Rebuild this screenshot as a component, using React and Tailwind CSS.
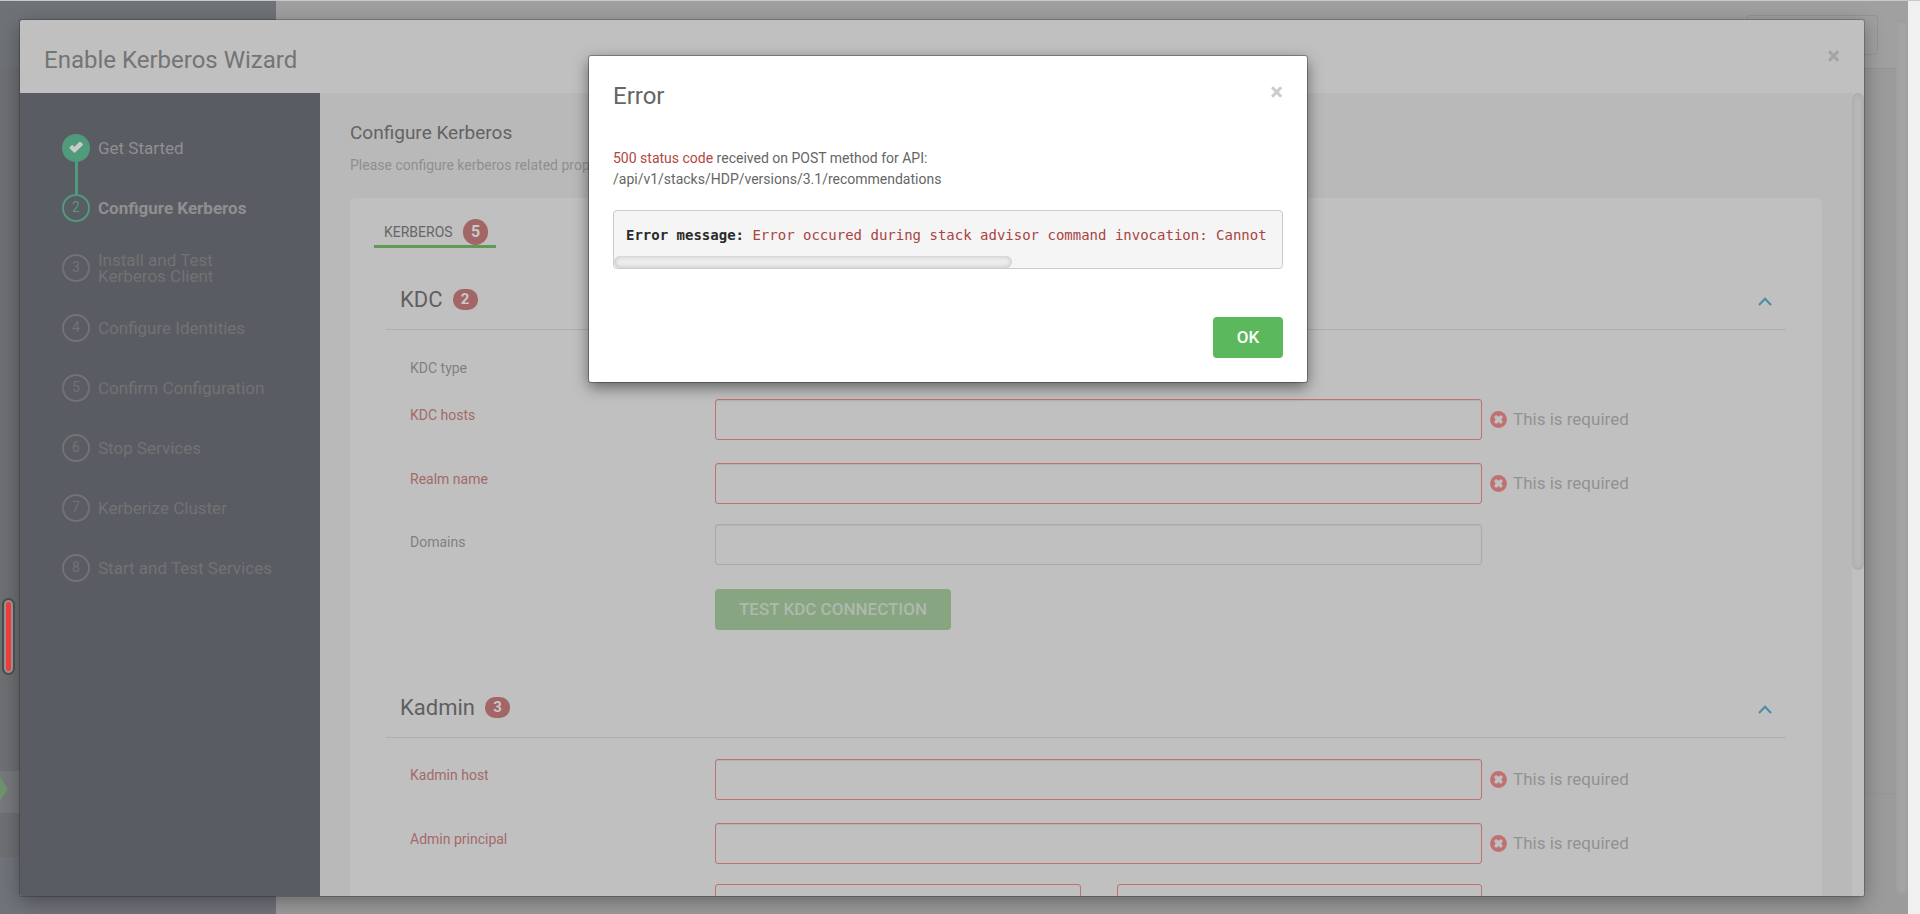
const steps = [
  { id: 1, label: 'Get Started', state: 'done' },
  { id: 2, label: 'Configure Kerberos', state: 'current' },
  { id: 3, label: 'Install and Test Kerberos Client' },
  { id: 4, label: 'Configure Identities' },
  { id: 5, label: 'Confirm Configuration' },
  { id: 6, label: 'Stop Services' },
  { id: 7, label: 'Kerberize Cluster' },
  { id: 8, label: 'Start and Test Services' },
]

function Check() {
  return (
    <svg viewBox="0 0 16 16" className="h-4 w-4" aria-hidden="true">
      <path
        d="M2.4 8.8 4.2 7 6.4 9.2 12 3.6 14 5.5 6.5 12.8Z"
        fill="#c8cbc9"
        stroke="#c8cbc9"
        strokeWidth="1.8"
        strokeLinejoin="round"
      />
    </svg>
  )
}

function ErrorIcon() {
  return (
    <svg viewBox="0 0 17 17" className="h-[17px] w-[17px] shrink-0" aria-hidden="true">
      <circle cx="8.5" cy="8.5" r="8.4" fill="#c07070" />
      <path
        d="M6.1 4.1 8.5 5.7 10.9 4.1 12.9 6.1 11.3 8.5 12.9 10.9 10.9 12.9 8.5 11.3 6.1 12.9 4.1 10.9 5.7 8.5 4.1 6.1Z"
        fill="#c0c0c0"
      />
    </svg>
  )
}

function Chevron() {
  return (
    <svg viewBox="0 0 14 9" className="h-[9px] w-3.5" aria-hidden="true">
      <path d="M1 8 7 1.8 13 8" fill="none" stroke="#4a8ba6" strokeWidth="2" />
    </svg>
  )
}

function Step({ step }) {
  const done = step.state === 'done'
  const current = step.state === 'current'
  let circle = 'border-[#727272] text-[#727272]'
  let text = 'text-[#727272]'
  if (done) {
    circle = 'border-[#4f9b7b] bg-[#4f9b7b]'
    text = 'text-[#8f8f8f]'
  }
  if (current) {
    circle = 'border-[#4f9b7b] text-[#4f9b7b]'
    text = 'font-bold text-[#8f8f8f]'
  }
  return (
    <li className="flex h-[60px] gap-2">
      <div className="flex flex-col items-center">
        <div
          className={
            'flex h-7 w-7 shrink-0 items-center justify-center rounded-full border-2 pb-0.5 text-sm leading-4 ' + circle
          }
        >
          {done ? <Check /> : step.id}
        </div>
        {done && <div className="w-[3px] grow bg-[#4f9b7b]" />}
      </div>
      <a href="#step" className={'flex h-7 w-44 items-center text-[17px] leading-4 ' + text}>
        <span className={step.id === 3 ? 'w-36' : ''}>{step.label}</span>
      </a>
    </li>
  )
}

function Section({ title, count, children }) {
  return (
    <section className="mx-9">
      <div className="flex h-[60px] items-center border-b border-[#adadad] px-3.5">
        <h3 className="text-[22px] leading-6 text-[#5f5f5f]">{title}</h3>
        <span className="ml-2.5 flex h-[21px] w-[25px] items-center justify-center rounded-[10px] bg-[#a26666] text-[15px] font-bold text-[#c8c8c8]">
          {count}
        </span>
        <button type="button" aria-label={'Collapse ' + title} className="ml-auto pt-1">
          <Chevron />
        </button>
      </div>
      {children}
    </section>
  )
}

function Field({ id, label, required, last }) {
  return (
    <div className={'flex items-start pl-6 ' + (last ? 'h-[61px]' : required ? 'h-16' : 'h-[65px]')}>
      <label
        htmlFor={id}
        className={'w-[305px] shrink-0 text-sm ' + (required ? 'pt-1.5 text-[#a36a6a]' : 'pt-2 text-[#808080]')}
      >
        {label}
      </label>
      <input
        id={id}
        type="text"
        className={
          'h-[41px] min-w-0 grow rounded-[3px] border px-3 shadow-[inset_0_1px_1px_rgba(0,0,0,0.07)] ' +
          (required ? 'border-[#c07070]' : 'border-[#aaaaaa]')
        }
      />
      <div className="flex h-[41px] w-[304px] shrink-0 items-center gap-1.5 pl-2 text-[17px] text-[#929292]">
        {required && (
          <>
            <ErrorIcon />
            This is required
          </>
        )}
      </div>
    </div>
  )
}

function Dashboard() {
  return (
    <div className="flex h-full pt-px">
      <div className="flex w-[276px] shrink-0 flex-col bg-[#6e6f73]">
        <div className="h-[66px] bg-[#6f7377]" />
        <div className="mt-[704px] h-[42px] bg-[#77787c]">
          <svg viewBox="0 0 8 42" className="h-[42px] w-2" aria-hidden="true">
            <path d="M0 6 8 18 0 30Z" fill="#6f946c" />
          </svg>
        </div>
        <div className="mt-11 grow bg-[#70737a]" />
      </div>
      <div className="grow bg-[#9b9b9b]">
        <div className="flex h-[68px] justify-end border-b border-[#949494] bg-[#a0a0a0] pt-3.5 pr-[30px]">
          <div className="h-10 w-[132px] rounded border border-[#949494]" />
        </div>
        <div className="h-[725px] border-b border-[#969696]" />
      </div>
      <div className="absolute top-5 right-3 h-[875px] w-3 rounded-full bg-[#a5a5a5] shadow-[inset_0_0_5px_rgba(0,0,0,0.08)]" />
      <div className="w-3 shrink-0 bg-[#f0f0f0]" />
    </div>
  )
}

function Wizard() {
  return (
    <div className="flex h-full flex-col overflow-hidden rounded-[2px] bg-[#c0c0c0] shadow-[0_5px_20px_rgba(0,0,0,0.35),0_0_0_1px_rgba(0,0,0,0.2)]">
      <header className="flex h-[73px] shrink-0 justify-between px-6">
        <h1 className="pt-6 text-2xl leading-8 text-[#747474]">Enable Kerberos Wizard</h1>
        <button type="button" aria-label="Close wizard" className="h-[71px] text-2xl font-bold text-[#a3a3a3]">
          ×
        </button>
      </header>
      <div className="flex min-h-0 grow">
        <nav className="w-[300px] shrink-0 bg-[#5a5c63] pt-[41px] pl-[42px]">
          <ol>
            {steps.map((step) => (
              <Step key={step.id} step={step} />
            ))}
          </ol>
        </nav>
        <main className="flex min-w-0 grow flex-col bg-[#b9b9b9] px-[30px] pt-7">
          <h2 className="text-[19px] leading-6 text-[#636363]">Configure Kerberos</h2>
          <p className="mt-2.5 h-[43px] shrink-0 text-sm text-[#8f8f8f]">Please configure kerberos related properties.</p>
          <div className="min-h-0 grow overflow-hidden rounded-t-md bg-[#c0c0c0] pt-5">
            <button
              type="button"
              className="ml-6 flex h-[30px] w-[122px] items-center justify-between border-b-[3px] border-[#609a54] pr-2 pl-2.5 text-sm text-[#666]"
            >
              KERBEROS
              <span className="flex h-[26px] w-[25px] items-center justify-center rounded-full bg-[#a26666] text-base font-bold text-[#c8c8c8]">
                5
              </span>
            </button>
            <div className="h-[22px]" />
            <Section title="KDC" count={2}>
              <div className="h-[69px] pt-7 pl-6 text-sm text-[#808080]">KDC type</div>
              <Field id="kdc-hosts" label="KDC hosts" required />
              <Field id="realm" label="Realm name" required last />
              <Field id="domains" label="Domains" />
              <div className="pl-[329px]">
                <button
                  type="button"
                  disabled
                  className="h-[41px] rounded bg-[#88a582] px-6 text-[17px] font-medium text-[#afb8ad]"
                >
                  TEST KDC CONNECTION
                </button>
              </div>
            </Section>
            <div className="h-12" />
            <Section title="Kadmin" count={3}>
              <div className="h-[21px]" />
              <Field id="kadmin-host" label="Kadmin host" required />
              <Field id="principal" label="Admin principal" required last />
              <div className="flex gap-9 pr-[304px] pl-[329px]">
                <input
                  aria-label="Admin password"
                  type="password"
                  className="h-[41px] min-w-0 flex-1 rounded-[3px] border border-[#c07070] px-3"
                />
                <input
                  aria-label="Confirm password"
                  type="password"
                  className="h-[41px] min-w-0 flex-1 rounded-[3px] border border-[#c07070] px-3"
                />
              </div>
            </Section>
          </div>
        </main>
        <div className="w-3 shrink-0 bg-[#c0c0c0]">
          <div className="h-[477px] rounded-full bg-[#b7b7b7] shadow-[inset_0_0_5px_rgba(0,0,0,0.1)]" />
        </div>
      </div>
    </div>
  )
}

function ErrorDialog() {
  return (
    <div
      role="dialog"
      aria-labelledby="error-title"
      className="w-[718px] rounded-[2px] bg-white p-6 shadow-[0_5px_15px_rgba(0,0,0,0.5),0_0_0_1px_rgba(0,0,0,0.3)]"
    >
      <div className="flex h-[68px] justify-between">
        <h2 id="error-title" className="text-2xl leading-8 text-[#666]">
          Error
        </h2>
        <button type="button" aria-label="Close" className="h-6 text-2xl leading-6 font-bold text-[#ccc]">
          ×
        </button>
      </div>
      <p className="text-sm leading-[21px] text-[#666]">
        <span className="text-[#b14743]">500 status code</span> received on POST method for API:
        <br />
        /api/v1/stacks/HDP/versions/3.1/recommendations
      </p>
      <div className="mt-5 overflow-hidden rounded border border-[#ccc] bg-[#f5f5f5]">
        <pre className="h-[45px] pt-3 pl-3 font-['DejaVu_Sans_Mono',monospace] text-sm leading-6 text-[#a94442]">
          <strong className="text-[#2b2b2b]">Error message:</strong> Error occured during stack advisor command invocation: Cannot
        </pre>
        <div className="h-3 w-[398px] rounded-full bg-[#ececec] shadow-[inset_0_0_5px_rgba(0,0,0,0.2)]" />
      </div>
      <div className="flex justify-end pt-12">
        <button type="button" className="h-[41px] w-[70px] rounded bg-[#5cb85c] text-[17px] font-medium text-white">
          OK
        </button>
      </div>
    </div>
  )
}

export default function App() {
  return (
    <div className="relative h-screen overflow-hidden bg-[#c9c9c9] font-[Roboto,sans-serif]">
      <Dashboard />
      <div className="absolute inset-0 pt-5 pr-14 pb-[18px] pl-5">
        <Wizard />
      </div>
      <div className="absolute top-[598px] left-0.5 h-[77px] w-[13px] rounded-full border-2 border-[#4a4a4a] bg-[#929292] p-0.5">
        <div className="h-full rounded-full bg-[#f03b3b]" />
      </div>
      <div className="absolute inset-x-0 top-14 flex justify-center pr-6">
        <ErrorDialog />
      </div>
    </div>
  )
}
